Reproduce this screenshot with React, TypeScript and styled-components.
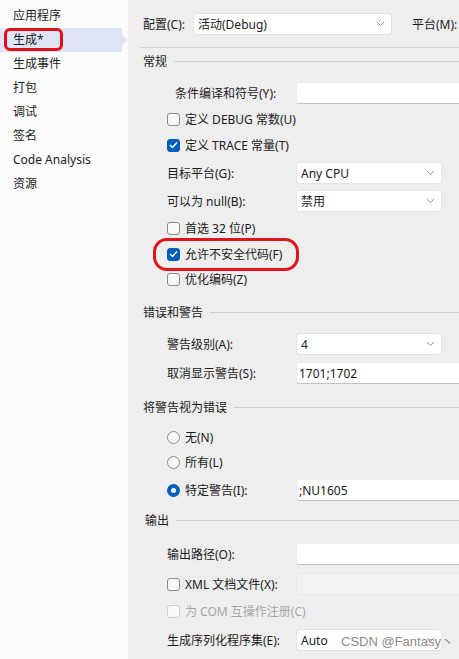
import styled, { createGlobalStyle } from 'styled-components';

const GlobalStyle = createGlobalStyle`
  html, body {
    margin: 0;
    padding: 0;
  }
  body {
    font-family: "Noto Sans", "Noto Sans CJK SC", sans-serif;
    font-size: 12px;
    color: #1b1b1b;
    background: #eeeeee;
  }
`;

const Page = styled.div`
  display: flex;
  width: 459px;
  height: 659px;
  overflow: hidden;
  position: relative;
`;

const Sidebar = styled.nav`
  width: 128px;
  flex-shrink: 0;
  background: #fbfbfb;
  padding-top: 4px;
  box-sizing: border-box;
`;

const NavItem = styled.div<{ $active?: boolean }>`
  position: relative;
  height: 24px;
  line-height: 24px;
  padding-left: 13px;
  margin-right: 6px;
  background: ${(p) => (p.$active ? '#dfe4f6' : 'transparent')};

  &::after {
    content: '';
    display: ${(p) => (p.$active ? 'block' : 'none')};
    position: absolute;
    right: -5px;
    top: 7px;
    border-left: 5px solid #dfe4f6;
    border-top: 5px solid transparent;
    border-bottom: 5px solid transparent;
  }
`;

const NavMark = styled.span`
  position: absolute;
  left: 4px;
  top: 0;
  width: 59px;
  height: 23px;
  box-sizing: border-box;
  border: 3px solid #e3101a;
  border-radius: 6px;
`;

const Main = styled.main`
  flex: 1;
  min-width: 0;
  overflow: hidden;
  padding-left: 15px;
`;

const TopBar = styled.div`
  display: flex;
  align-items: center;
  height: 47px;
  margin-left: -3px;
  padding-left: 3px;
  border-bottom: 1px solid #d2d2d2;
  white-space: nowrap;
`;

const TopLabel = styled.span<{ $width?: number; $ml?: number }>`
  width: ${(p) => (p.$width ? `${p.$width}px` : 'auto')};
  margin-left: ${(p) => p.$ml ?? 0}px;
  flex-shrink: 0;
`;

const Row = styled.div<{ $mt: number; $indent?: number }>`
  position: relative;
  display: flex;
  align-items: center;
  height: 22px;
  margin-top: ${(p) => p.$mt}px;
  padding-left: ${(p) => p.$indent ?? 24}px;
  white-space: nowrap;
`;

const SectionTitle = styled(Row)`
  &::after {
    content: '';
    flex: 1;
    height: 1px;
    margin-left: 7px;
    background: #d0d0d0;
  }
`;

const FieldLabel = styled.span<{ $pad?: number }>`
  display: flex;
  align-items: center;
  width: 129px;
  flex-shrink: 0;
  box-sizing: border-box;
  padding-left: ${(p) => p.$pad ?? 0}px;
`;

const SelectBox = styled.div<{ $width: number }>`
  width: ${(p) => p.$width}px;
  height: 22px;
  flex-shrink: 0;
  box-sizing: border-box;
  display: flex;
  align-items: center;
  justify-content: space-between;
  padding: 0 6px 0 4px;
  background: #ffffff;
  border: 1px solid #e4e4e4;
  border-radius: 3px;
`;

const TextBox = styled.div<{ $disabled?: boolean }>`
  flex: 1;
  height: 22px;
  box-sizing: border-box;
  display: flex;
  align-items: center;
  padding-left: 2px;
  background: ${(p) => (p.$disabled ? '#f2f2f2' : '#ffffff')};
  border: 1px solid ${(p) => (p.$disabled ? '#e8e8e8' : '#ececec')};
  border-bottom-color: ${(p) => (p.$disabled ? '#e8e8e8' : '#c2c2c2')};
  border-right: none;
  border-radius: 3px 0 0 3px;
`;

const Box = styled.span<{ $checked?: boolean; $disabled?: boolean }>`
  width: 13px;
  height: 13px;
  box-sizing: border-box;
  flex-shrink: 0;
  margin-right: 5px;
  border-radius: 3px;
  display: flex;
  align-items: center;
  justify-content: center;
  background: ${(p) => (p.$checked ? '#005fb8' : '#f9f9f9')};
  border: 1px solid
    ${(p) => (p.$checked ? '#005fb8' : p.$disabled ? '#cdcdcd' : '#8a8a8a')};
`;

const Radio = styled.span<{ $checked?: boolean }>`
  width: 13px;
  height: 13px;
  box-sizing: border-box;
  flex-shrink: 0;
  margin-right: 5px;
  border-radius: 50%;
  background: #f9f9f9;
  border: ${(p) => (p.$checked ? '4px solid #005fb8' : '1px solid #8a8a8a')};
`;

const Caption = styled.span<{ $disabled?: boolean }>`
  color: ${(p) => (p.$disabled ? '#a6a6a6' : 'inherit')};
`;

const Highlight = styled.span`
  position: absolute;
  left: 10px;
  top: -5px;
  width: 146px;
  height: 33px;
  box-sizing: border-box;
  border: 3px solid #e0141c;
  border-radius: 14px;
`;

const Watermark = styled.div`
  position: absolute;
  left: 341px;
  top: 631px;
  font-family: "Liberation Sans", "Noto Sans CJK SC", sans-serif;
  font-size: 13px;
  color: #8c8c8c;
  white-space: nowrap;
`;

const Chevron = () => (
  <svg width="9" height="6" viewBox="0 0 9 6">
    <polyline points="1,1 4.5,4.5 8,1" fill="none" stroke="#8f8f8f" strokeWidth="1" />
  </svg>
);

const Check = () => (
  <svg width="9" height="8" viewBox="0 0 9 8">
    <polyline points="1,4 3.5,6.5 8,1.5" fill="none" stroke="#ffffff" strokeWidth="1.4" />
  </svg>
);

const Select = ({ value, width }: { value: string; width: number }) => (
  <SelectBox $width={width}>
    <span>{value}</span>
    <Chevron />
  </SelectBox>
);

const CheckItem = ({ label, checked, disabled }: { label: string; checked?: boolean; disabled?: boolean }) => (
  <>
    <Box $checked={checked} $disabled={disabled}>{checked && <Check />}</Box>
    <Caption $disabled={disabled}>{label}</Caption>
  </>
);

const NAV = ['应用程序', '生成*', '生成事件', '打包', '调试', '签名', 'Code Analysis', '资源'];

const App = () => {
  return (
    <Page>
      <GlobalStyle />
      <Sidebar>
        {NAV.map((n) => (
          <NavItem key={n} $active={n === '生成*'}>
            {n}
            {n === '生成*' && <NavMark />}
          </NavItem>
        ))}
      </Sidebar>
      <Main>
        <TopBar>
          <TopLabel $width={50}>配置(C):</TopLabel>
          <Select value="活动(Debug)" width={199} />
          <TopLabel $ml={20}>平台(M):</TopLabel>
        </TopBar>

        <SectionTitle $mt={2} $indent={0}>常规</SectionTitle>
        <Row $mt={10}>
          <FieldLabel $pad={8}>条件编译和符号(Y):</FieldLabel>
          <TextBox />
        </Row>
        <Row $mt={4}><CheckItem label="定义 DEBUG 常数(U)" /></Row>
        <Row $mt={4}><CheckItem label="定义 TRACE 常量(T)" checked /></Row>
        <Row $mt={6}>
          <FieldLabel>目标平台(G):</FieldLabel>
          <Select value="Any CPU" width={146} />
        </Row>
        <Row $mt={6}>
          <FieldLabel>可以为 null(B):</FieldLabel>
          <Select value="禁用" width={146} />
        </Row>
        <Row $mt={5}><CheckItem label="首选 32 位(P)" /></Row>
        <Row $mt={4}>
          <CheckItem label="允许不安全代码(F)" checked />
          <Highlight />
        </Row>
        <Row $mt={3}><CheckItem label="优化编码(Z)" /></Row>

        <SectionTitle $mt={11} $indent={0}>错误和警告</SectionTitle>
        <Row $mt={10}>
          <FieldLabel>警告级别(A):</FieldLabel>
          <Select value="4" width={146} />
        </Row>
        <Row $mt={7}>
          <FieldLabel>取消显示警告(S):</FieldLabel>
          <TextBox>1701;1702</TextBox>
        </Row>

        <SectionTitle $mt={12} $indent={0}>将警告视为错误</SectionTitle>
        <Row $mt={8}><Radio /><span>无(N)</span></Row>
        <Row $mt={3}><Radio /><span>所有(L)</span></Row>
        <Row $mt={6}>
          <FieldLabel><Radio $checked />特定警告(I):</FieldLabel>
          <TextBox>;NU1605</TextBox>
        </Row>

        <SectionTitle $mt={8} $indent={2}>输出</SectionTitle>
        <Row $mt={12}>
          <FieldLabel>输出路径(O):</FieldLabel>
          <TextBox />
        </Row>
        <Row $mt={8}>
          <FieldLabel><CheckItem label="XML 文档文件(X):" /></FieldLabel>
          <TextBox $disabled />
        </Row>
        <Row $mt={5}><CheckItem label="为 COM 互操作注册(C)" disabled /></Row>
        <Row $mt={7}>
          <FieldLabel>生成序列化程序集(E):</FieldLabel>
          <Select value="Auto" width={146} />
        </Row>
      </Main>
      <Watermark>CSDN @Fantasy丶</Watermark>
    </Page>
  );
};

export default App;
